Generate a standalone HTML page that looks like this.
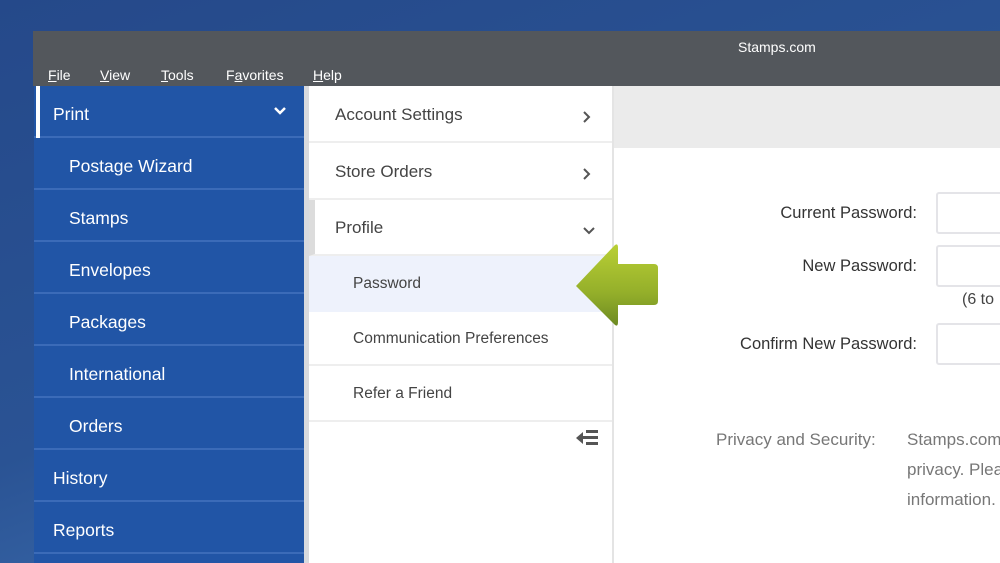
<!DOCTYPE html>
<html><head><style>
*{margin:0;padding:0;box-sizing:border-box}
body{width:1000px;height:563px;overflow:hidden;position:relative;background:linear-gradient(160deg,#25498a 0%,#2a5394 50%,#4a7fc0 100%);font-family:"Liberation Sans",sans-serif}
.a{position:absolute}
.title{left:33px;top:31px;width:967px;height:55px;background:#53575c}
.menu span{position:absolute;top:67px;color:#fff;font-size:14px}
.side{left:34px;top:86px;width:270px;height:477px;background:#2155a6}
.row{position:absolute;left:0;width:270px;height:52px;border-bottom:2px solid #3b6bb8;color:#fff;font-size:17.5px;line-height:56px}
.mid{left:304px;top:86px;width:308px;height:477px;background:#fff;border-left:5px solid #d8dade}
.mi{position:absolute;left:0;width:303px;border-bottom:2px solid #eeeeee;color:#444;font-size:17px}
.right{left:612px;top:86px;width:388px;height:477px;background:#fff;border-left:2px solid #e4e4e4}
.lbl{position:absolute;color:#333;font-size:16.5px;text-align:right;width:300px}
.inp{position:absolute;left:936px;width:80px;height:42px;border:2px solid #e4e4e8;border-radius:3px;background:#fff}
.chev{position:absolute;left:274px;top:25px}
</style></head><body>
<div class="a title"></div>
<div class="a" style="left:738px;top:39px;color:#fff;font-size:14px">Stamps.com</div>
<div class="menu">
<span style="left:48px"><u>F</u>ile</span><span style="left:100px"><u>V</u>iew</span><span style="left:161px"><u>T</u>ools</span><span style="left:226px">F<u>a</u>vorites</span><span style="left:313px"><u>H</u>elp</span>
</div>
<div class="a side">
<div class="row" style="top:0;padding-left:19px">Print<svg class="a" style="left:240px;top:20px" width="12" height="9"><path d="M1 2l5 5 5-5" stroke="#fff" stroke-width="2.5" fill="none"/></svg></div>
<div class="a" style="left:2px;top:0;width:4px;height:52px;background:#fff"></div>
<div class="row" style="top:52px;padding-left:35px">Postage Wizard</div>
<div class="row" style="top:104px;padding-left:35px">Stamps</div>
<div class="row" style="top:156px;padding-left:35px">Envelopes</div>
<div class="row" style="top:208px;padding-left:35px">Packages</div>
<div class="row" style="top:260px;padding-left:35px">International</div>
<div class="row" style="top:312px;padding-left:35px">Orders</div>
<div class="row" style="top:364px;padding-left:19px">History</div>
<div class="row" style="top:416px;padding-left:19px">Reports</div>
</div>
<div class="a mid">
<div class="mi" style="top:0;height:57px;line-height:57px;padding-left:26px">Account Settings<svg class="chev" width="8" height="12"><path d="M1 1l5 5-5 5" stroke="#555" stroke-width="2" fill="none"/></svg></div>
<div class="mi" style="top:57px;height:57px;line-height:57px;padding-left:26px">Store Orders<svg class="chev" width="8" height="12"><path d="M1 1l5 5-5 5" stroke="#555" stroke-width="2" fill="none"/></svg></div>
<div class="mi" style="top:114px;height:56px;line-height:56px;border-left:6px solid #dcdcdc;padding-left:20px">Profile<svg class="a" style="left:268px;top:27px" width="12" height="8"><path d="M1 1l5 5 5-5" stroke="#555" stroke-width="2" fill="none"/></svg></div>
<div class="mi" style="top:170px;height:56px;line-height:56px;padding-left:44px;background:#eef2fc;font-size:15.5px;border:none">Password</div>
<div class="mi" style="top:226px;height:54px;line-height:54px;padding-left:44px;font-size:15.5px">Communication Preferences</div>
<div class="mi" style="top:280px;height:56px;line-height:56px;padding-left:44px;font-size:15.5px">Refer a Friend</div>
<svg class="a" style="left:265px;top:343px" width="26" height="18"><path d="M2 9l7-6v12z" fill="#555"/><rect x="8" y="7" width="16" height="3" fill="#555"/><rect x="12" y="1" width="12" height="3" fill="#555"/><rect x="12" y="13" width="12" height="3" fill="#555"/></svg>
</div>
<div class="a right"><div class="a" style="left:0;top:0;width:388px;height:62px;background:#ebebeb"></div></div>
<div class="lbl" style="left:617px;top:204px">Current Password:</div>
<div class="lbl" style="left:617px;top:257px">New Password:</div>
<div class="a" style="left:962px;top:291px;color:#444;font-size:16px">(6 to</div>
<div class="lbl" style="left:617px;top:335px">Confirm New Password:</div>
<div class="inp" style="top:192px"></div><div class="inp" style="top:245px"></div><div class="inp" style="top:323px"></div>
<div class="a" style="left:716px;top:430px;color:#777;font-size:17px">Privacy and Security:</div>
<div class="a" style="left:907px;top:425px;color:#777;font-size:17px;line-height:30px;white-space:nowrap">Stamps.com<br>privacy. Please<br>information.</div>
<svg class="a" style="left:570px;top:238px" width="95" height="95">
<defs><linearGradient id="g" x1="0" y1="0" x2="0" y2="1"><stop offset="0" stop-color="#b9cf35"/><stop offset="0.6" stop-color="#94af2a"/><stop offset="1" stop-color="#6d8a22"/></linearGradient></defs>
<path d="M6 48 L44 8 Q48 4 48 10 L48 26 L84 26 Q88 26 88 30 L88 63 Q88 67 84 67 L48 67 L48 84 Q48 90 44 86 Z" fill="url(#g)"/>
</svg>
</body></html>
